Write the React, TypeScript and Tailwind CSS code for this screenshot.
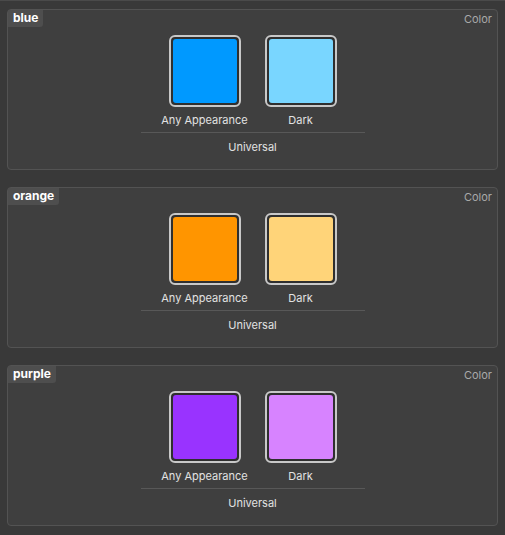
const COLORS = [
  { name: "blue", any: "#0099ff", dark: "#79d6ff" },
  { name: "orange", any: "#ff9500", dark: "#ffd479" },
  { name: "purple", any: "#9933ff", dark: "#d783ff" },
];

function Swatch({ color, label }: { color: string; label: string }) {
  return (
    <div className="flex w-[96px] flex-col items-center">
      <div className="h-[72px] w-[72px] rounded-[6px] border-2 border-[#c8c8c8] bg-[#2f2f2f] p-[2px]">
        <div className="h-full w-full rounded-[3px]" style={{ backgroundColor: color }} />
      </div>
      <span className="mt-[7px] text-[11px] leading-[13px] text-[#e2e2e2]">{label}</span>
    </div>
  );
}

function ColorPanel({ name, any, dark }: { name: string; any: string; dark: string }) {
  return (
    <div className="flex h-[161px] flex-col rounded-[4px] border border-[#535353] bg-[#3f3f3f]">
      <div className="flex items-start justify-between">
        <span className="h-[17px] rounded-br-[3px] bg-[#4e4e4e] px-[5px] text-[12px] font-bold leading-[16px] text-white">
          {name}
        </span>
        <span className="mr-[5px] mt-[3px] text-[11px] leading-[13px] text-[#a9a9a9]">Color</span>
      </div>
      <div className="mt-[8px] flex flex-col items-center">
        <div className="flex">
          <Swatch color={any} label="Any Appearance" />
          <Swatch color={dark} label="Dark" />
        </div>
        <div className="mt-[5px] h-px w-[224px] bg-[#585858]" />
        <span className="mt-[8px] text-[11px] leading-[13px] text-[#e2e2e2]">Universal</span>
      </div>
    </div>
  );
}

export default function App() {
  return (
    <div
      className="flex h-[535px] w-[505px] flex-col gap-[17px] border-t border-[#4a4a4a] bg-[#393939] px-[7px] pt-[8px]"
      style={{ fontFamily: "Inter, 'Noto Sans', sans-serif" }}
    >
      {COLORS.map((c) => (
        <ColorPanel key={c.name} {...c} />
      ))}
    </div>
  );
}
